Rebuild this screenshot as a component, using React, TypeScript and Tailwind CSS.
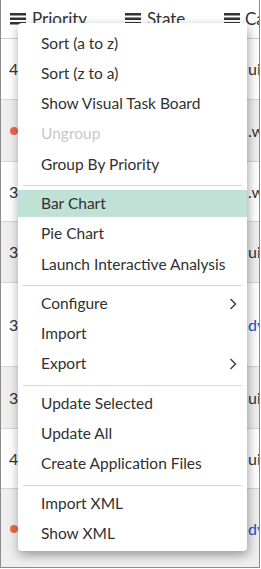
import React from "react";

type Row = { h: string; shade: boolean; left: React.ReactNode; right: string; link?: boolean };

const rows: Row[] = [
  { h: "h-[61px]", shade: false, left: "4", right: "uired" },
  { h: "h-[62px]", shade: true, left: "dot", right: ".wiki" },
  { h: "h-[60px]", shade: false, left: "3", right: ".wiki" },
  { h: "h-[61px]", shade: true, left: "3", right: "uired" },
  { h: "h-[84px]", shade: false, left: "3", right: "dvanced", link: true },
  { h: "h-[62px]", shade: true, left: "3", right: "uired" },
  { h: "h-[60px]", shade: false, left: "4", right: "uired" },
  { h: "h-[80px]", shade: true, left: "dot", right: "dvanced", link: true },
];

type Item = { label: string; disabled?: boolean; active?: boolean; sub?: boolean };

const groups: Item[][] = [
  [
    { label: "Sort (a to z)" },
    { label: "Sort (z to a)" },
    { label: "Show Visual Task Board" },
    { label: "Ungroup", disabled: true },
    { label: "Group By Priority" },
  ],
  [{ label: "Bar Chart", active: true }, { label: "Pie Chart" }, { label: "Launch Interactive Analysis" }],
  [{ label: "Configure", sub: true }, { label: "Import" }, { label: "Export", sub: true }],
  [{ label: "Update Selected" }, { label: "Update All" }, { label: "Create Application Files" }],
  [{ label: "Import XML" }, { label: "Show XML" }],
];

function Bars() {
  return (
    <svg width="16" height="12" viewBox="0 0 16 12" className="shrink-0">
      <rect x="0" y="0" width="16" height="2.5" fill="#333" />
      <rect x="0" y="4.5" width="16" height="2.5" fill="#333" />
      <rect x="0" y="9" width="16" height="2.5" fill="#333" />
    </svg>
  );
}

function Chevron() {
  return (
    <svg width="8" height="12" viewBox="0 0 8 12" className="shrink-0">
      <path d="M1.5 1 L6.5 6 L1.5 11" fill="none" stroke="#444" strokeWidth="1.5" />
    </svg>
  );
}

export default function App() {
  return (
    <div className="relative h-[569px] w-[261px] overflow-hidden bg-white font-['Lato','Open_Sans',sans-serif] text-[#333]">
      <div className="h-[568px] w-[260px] overflow-hidden border-x border-b border-[#8c8c8c]">
        <div className="flex h-[39px] items-center border-b border-[#d0d0d0] pb-[1px] text-[17px]">
          <div className="flex w-[124px] shrink-0 items-center gap-[6px] pl-[9px]">
            <Bars />
            <span>Priority</span>
          </div>
          <div className="flex w-[99px] shrink-0 items-center gap-[6px]">
            <Bars />
            <span>State</span>
          </div>
          <div className="flex shrink-0 items-center gap-[5px] whitespace-nowrap">
            <Bars />
            <span>Category</span>
          </div>
        </div>
        {rows.map((r, i) => (
          <div
            key={i}
            className={`flex ${r.h} items-center border-b border-[#d6d6d6] text-[16px] ${r.shade ? "bg-[#efefef]" : "bg-white"}`}
          >
            <div className="w-[247px] shrink-0 pl-[8px]">
              {r.left === "dot" ? (
                <span className="ml-[1px] block h-[8px] w-[8px] rounded-full bg-[#f0664a]" />
              ) : (
                r.left
              )}
            </div>
            <div className={`shrink-0 whitespace-nowrap ${r.link ? "text-[#1d4fcf]" : ""}`}>{r.right}</div>
          </div>
        ))}
      </div>

      <div className="absolute left-[18px] top-[23px] w-[229px] rounded-[4px] bg-white pb-[2px] pt-[5px] text-[15.5px] text-[#303030] shadow-[1px_4px_11px_rgba(0,0,0,0.38)]">
        {groups.map((g, gi) => (
          <div key={gi}>
            {gi > 0 && <div className="mx-[5px] mb-[2px] mt-[6px] h-px bg-[#d8d8d8]" />}
            {g.map((it) =>
              it.active ? (
                <div key={it.label} className="flex h-[30.3px] items-center">
                  <div className="flex h-[27px] w-full items-center bg-[#c0e1d6] pl-[23px]">{it.label}</div>
                </div>
              ) : (
                <div
                  key={it.label}
                  className={`flex h-[30.3px] items-center justify-between pl-[23px] pr-[10px] ${it.disabled ? "text-[#c8c8c8]" : ""}`}
                >
                  <span>{it.label}</span>
                  {it.sub && <Chevron />}
                </div>
              )
            )}
          </div>
        ))}
      </div>
    </div>
  );
}
